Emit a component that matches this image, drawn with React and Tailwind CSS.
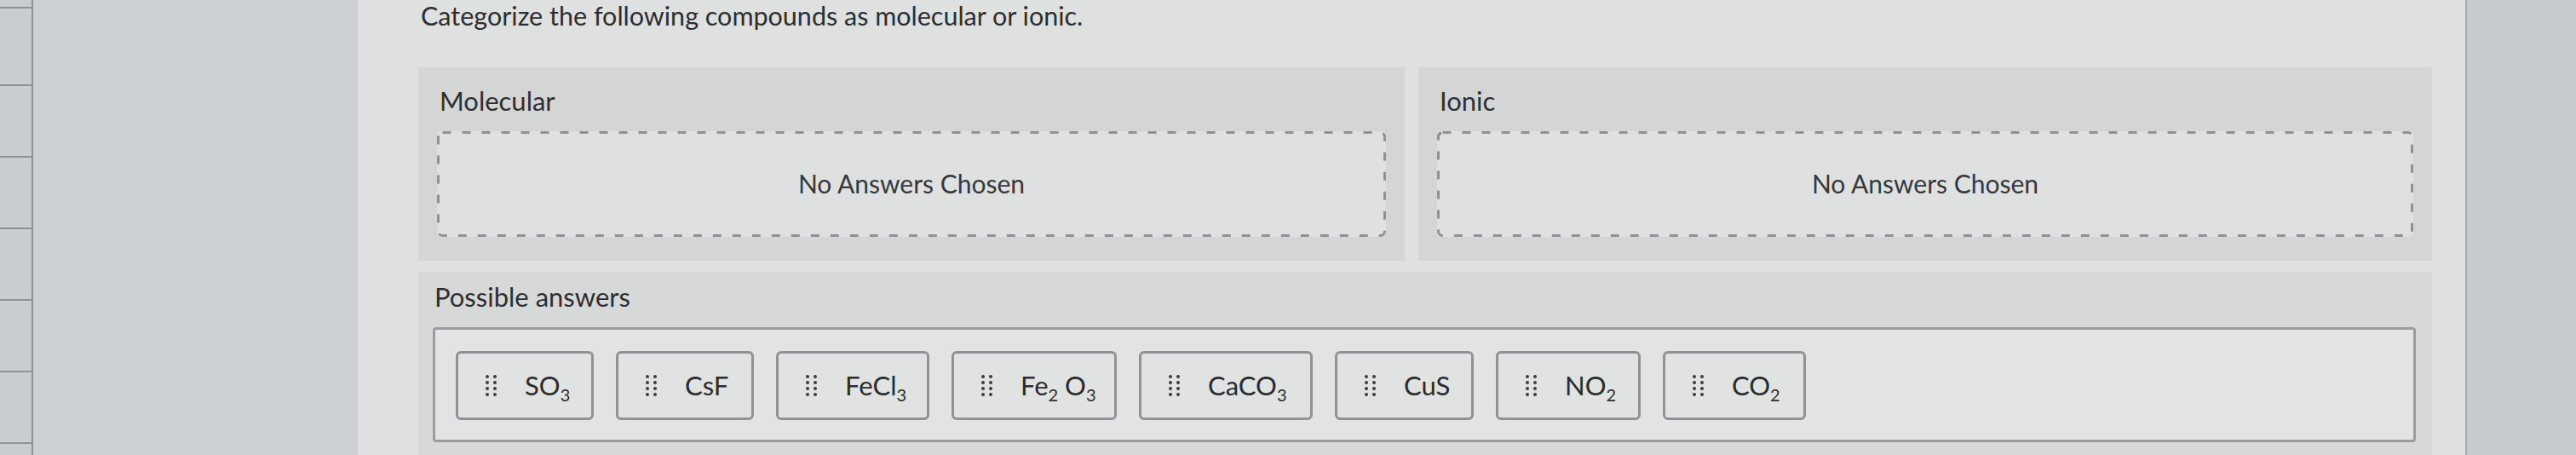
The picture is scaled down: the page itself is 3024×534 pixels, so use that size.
import React from "react";

const chips = [
  { w: 162, parts: ["SO", "3"] },
  { w: 162, parts: ["CsF"] },
  { w: 180, parts: ["FeCl", "3"] },
  { w: 194, parts: ["Fe", "2", " O", "3"] },
  { w: 204, parts: ["CaCO", "3"] },
  { w: 163, parts: ["CuS"] },
  { w: 170, parts: ["NO", "2"] },
  { w: 168, parts: ["CO", "2"] },
];

function Handle() {
  return (
    <div className="grid grid-cols-2 gap-x-[5px] gap-y-[3px] shrink-0">
      {Array.from({ length: 8 }).map((_, i) => (
        <span key={i} className="block w-[4px] h-[4px] rounded-full bg-[#3a3c3f]" />
      ))}
    </div>
  );
}

function Chip({ w, parts }) {
  return (
    <div
      className="h-[81px] shrink-0 flex items-center pl-[32px] gap-[33px] border-[3px] border-[#8f9396] rounded-[6px] bg-[#e1e2e2]"
      style={{ width: w }}
    >
      <Handle />
      <span className="text-[31px] leading-none text-[#2a2c2e] whitespace-pre">
        {parts.map((p, i) =>
          i % 2 === 1 ? (
            <span key={i} className="relative top-[7px] text-[20px]">
              {p}
            </span>
          ) : (
            <span key={i}>{p}</span>
          )
        )}
      </span>
    </div>
  );
}

function DropZone() {
  return (
    <div className="relative mt-[17px] h-[124px] rounded-[5px] bg-[#dfe0e0] flex items-center justify-center">
      <svg className="absolute inset-0 w-full h-full overflow-visible" preserveAspectRatio="none">
        <rect
          x="1.5"
          y="1.5"
          width="calc(100% - 3px)"
          height="calc(100% - 3px)"
          rx="5"
          fill="none"
          stroke="#8e9295"
          strokeWidth="3"
          strokeDasharray="10 13"
        />
      </svg>
      <span className="text-[30px] text-[#36393c]">No Answers Chosen</span>
    </div>
  );
}

function Category({ label }) {
  return (
    <div className="bg-[#d4d5d5] pt-[21px] pb-[28px] px-[22px] flex flex-col">
      <div className="text-[31px] leading-[1.2] text-[#2d2f32] pl-[3px]">{label}</div>
      <DropZone />
    </div>
  );
}

export default function App() {
  return (
    <div className="w-[3024px] h-[534px] overflow-hidden flex bg-[#cacdd0] font-[Lato,sans-serif]">
      {/* left strip */}
      <div className="w-[39px] h-full shrink-0 border-r-[2px] border-[#8f9295] bg-[#c9ccd0] flex flex-col">
        <div className="h-[10px] border-b-[2px] border-[#8f9295]" />
        <div className="h-[91px] border-b-[2px] border-[#8f9295]" />
        <div className="h-[84px] border-b-[2px] border-[#8f9295]" />
        <div className="h-[84px] border-b-[2px] border-[#8f9295]" />
        <div className="h-[84px] border-b-[2px] border-[#8f9295]" />
        <div className="h-[84px] border-b-[2px] border-[#8f9295]" />
        <div className="h-[84px] border-b-[2px] border-[#8f9295]" />
      </div>
      {/* left gray */}
      <div className="w-[381px] h-full shrink-0 bg-[#cdd0d3]" />
      {/* main panel */}
      <div className="w-[2476px] h-full shrink-0 bg-[#dfe0e0] border-r-[2px] border-[#a3a7ab] pl-[71px] flex flex-col">
        <div className="ml-[3px] text-[30.5px] leading-[1.2] text-[#2c2e31]">
          Categorize the following compounds as molecular or ionic.
        </div>
        <div className="mt-[42px] w-[2364px] grid grid-cols-[1158px_1190px] gap-[16px]">
          <Category label="Molecular" />
          <Category label="Ionic" />
        </div>
        <div className="mt-[13px] w-[2364px] flex-1 bg-[#d7d8d8] pt-[11px] pl-[17px] pr-[19px] flex flex-col">
          <div className="ml-[2px] text-[31px] leading-[1.2] text-[#2d2f32]">Possible answers</div>
          <div className="mt-[17px] h-[135px] border-[3px] border-[#999da0] rounded-[4px] bg-[#e2e3e3] pl-[24px] pt-[25px] flex gap-[26px]">
            {chips.map((c, i) => (
              <Chip key={i} {...c} />
            ))}
          </div>
        </div>
      </div>
      {/* right gray */}
      <div className="flex-1 h-full bg-[#c8cbce]" />
    </div>
  );
}
